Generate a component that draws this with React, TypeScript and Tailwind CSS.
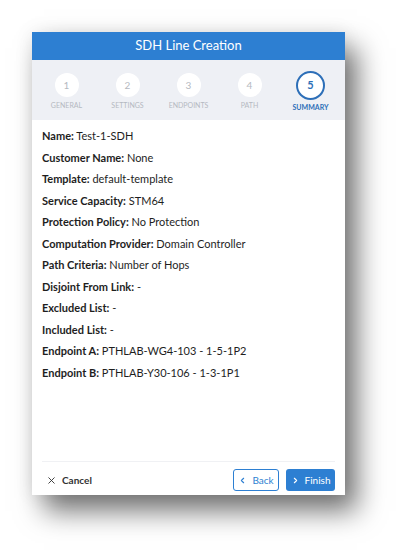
import { X, ChevronLeft, ChevronRight } from "lucide-react";

const steps = [
  { n: 1, label: "General" },
  { n: 2, label: "Settings" },
  { n: 3, label: "Endpoints" },
  { n: 4, label: "Path" },
  { n: 5, label: "Summary", active: true },
];

const rows = [
  ["Name:", "Test-1-SDH"],
  ["Customer Name:", "None"],
  ["Template:", "default-template"],
  ["Service Capacity:", "STM64"],
  ["Protection Policy:", "No Protection"],
  ["Computation Provider:", "Domain Controller"],
  ["Path Criteria:", "Number of Hops"],
  ["Disjoint From Link:", "-"],
  ["Excluded List:", "-"],
  ["Included List:", "-"],
  ["Endpoint A:", "PTHLAB-WG4-103 - 1-5-1P2"],
  ["Endpoint B:", "PTHLAB-Y30-106 - 1-3-1P1"],
];

export default function App() {
  return (
    <div className="w-[408px] h-[558px] bg-white pt-[32px] pl-[32px] font-['Lato',sans-serif]">
      <div className="w-[313px] h-[463px] flex flex-col bg-white shadow-[12px_16px_26px_rgba(0,0,0,0.55),0_0_18px_rgba(0,0,0,0.08)]">
        <div className="h-[28px] bg-[#2d7fd2] text-white text-[13px] flex items-center justify-center">
          SDH Line Creation
        </div>
        <div className="h-[60px] bg-[#eef0f5] grid grid-cols-5 px-[4px]">
          {steps.map((s) => (
            <div key={s.n} className="flex flex-col items-center">
              {s.active ? (
                <div className="mt-[11px] w-[29px] h-[29px] rounded-full bg-white border-2 border-[#2d6fb8] flex items-center justify-center text-[11px] font-bold text-[#2d6fb8]">
                  {s.n}
                </div>
              ) : (
                <div className="mt-[13px] w-[24px] h-[24px] rounded-full bg-white flex items-center justify-center text-[10px] text-[#b5b9c1]">
                  {s.n}
                </div>
              )}
              <div
                className={
                  s.active
                    ? "mt-[2px] text-[7px] uppercase font-bold text-[#2d6fb8]"
                    : "mt-[3px] text-[7px] uppercase text-[#b5b9c1]"
                }
              >
                {s.label}
              </div>
            </div>
          ))}
        </div>
        <div className="flex-1 pl-[10px] pt-[5px] text-[11px] text-[#1e1e1e]">
          {rows.map(([k, v]) => (
            <div key={k} className="leading-[21.5px]">
              <span className="font-bold">{k}</span> {v}
            </div>
          ))}
        </div>
        <div className="mx-[10px] border-t border-[#f0f1f4]" />
        <div className="flex items-center pt-[7px] pb-[4px] pl-[14px] pr-[10px]">
          <X className="w-[11px] h-[11px] text-[#333]" strokeWidth={2} />
          <span className="ml-[5px] text-[10px] font-bold text-[#333]">Cancel</span>
          <div className="ml-auto flex gap-[7px]">
            <button className="w-[46px] h-[22px] border border-[#2d7fd2] rounded-[3px] bg-white text-[#2d7fd2] text-[10px] flex items-center justify-center gap-[5px]">
              <ChevronLeft className="w-[9px] h-[9px]" strokeWidth={3} />
              Back
            </button>
            <button className="w-[49px] h-[22px] rounded-[3px] bg-[#2d7fd2] text-white text-[10px] flex items-center justify-center gap-[5px]">
              <ChevronRight className="w-[9px] h-[9px]" strokeWidth={3} />
              Finish
            </button>
          </div>
        </div>
      </div>
    </div>
  );
}
